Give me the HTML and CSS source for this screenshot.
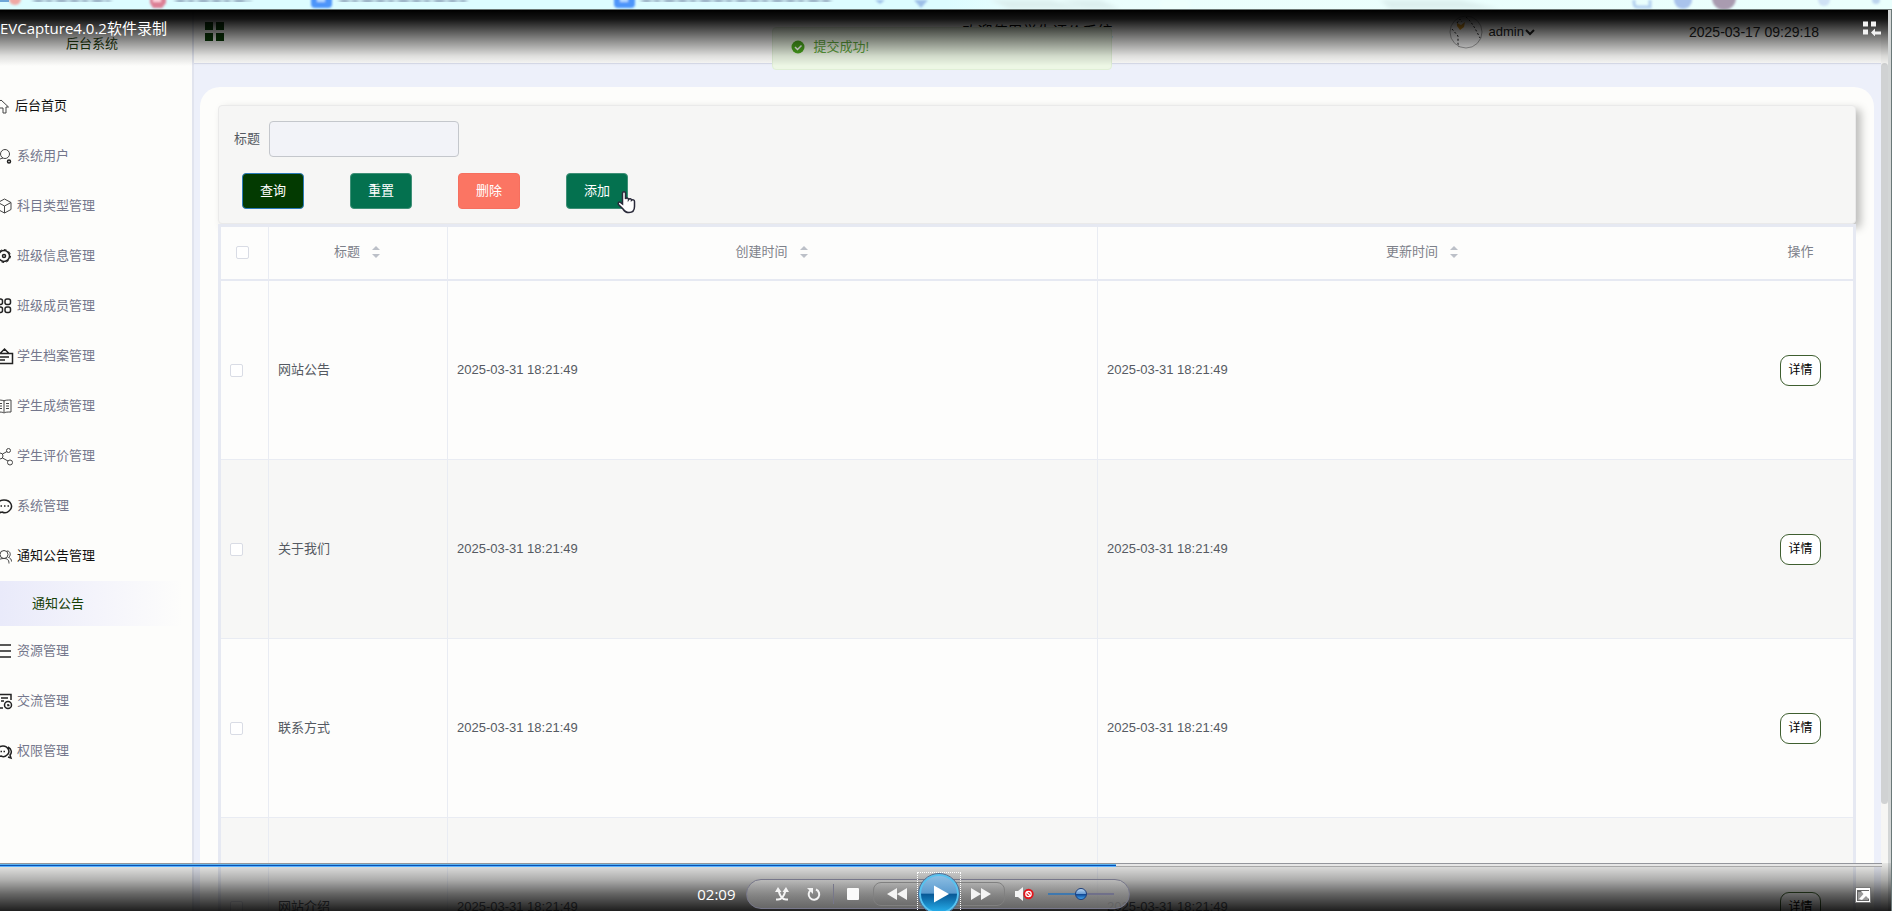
FILE: index.html
```html
<!DOCTYPE html>
<html lang="zh-CN">
<head>
<meta charset="utf-8">
<title>EVCapture4.0.2软件录制</title>
<link rel="stylesheet" href="styles.css">
</head>
<body>
<div class="desktop-strip" aria-hidden="true">
  <svg class="strip-art" width="1892" height="9" viewBox="0 0 1892 9">
    <defs>
      <filter id="soft" x="-20%" y="-100%" width="140%" height="300%"><feGaussianBlur stdDeviation="2"/></filter>
      <filter id="faint" x="-20%" y="-100%" width="140%" height="300%"><feGaussianBlur stdDeviation="1"/></filter>
    </defs>
    <path d="M1010 9l-20-9h60l40 9zM1090 9l-30-9h40l20 9zM1390 9l-10-9h80l40 9z" fill="#dcefee" filter="url(#soft)"/>
    <path d="M1160 0h30v9h-30z" fill="#eefffc" filter="url(#soft)"/>
    <g fill="none" stroke="#9cb4c6" stroke-width="9" stroke-dasharray="9 3 6 4 11 3" filter="url(#soft)">
      <path d="M34 0h76M176 1h74M340 1h128M642 0h188"/>
    </g>
    <g filter="url(#faint)">
      <circle cx="15" cy="-1" r="6" fill="#f0a8a4"/>
      <path d="M150 -4h16v7l-4 5h-9l-3-5z" fill="#dd7f95"/>
      <path d="M153 -2h8v4h-8z" fill="#ffd4de"/>
      <path d="M311 -4h21v8q0 4-4 4h-13q-4 0-4-4zM614 -4h21v8q0 4-4 4h-13q-4 0-4-4z" fill="#4d95fa"/>
      <path d="M317 -4h8v6h-8zM620 -4h8v6h-8z" fill="#b9dcff"/>
      <path d="M1634 0v3q0 4 4 4h12V0" fill="none" stroke="#b3d0ef" stroke-width="3"/>
      <circle cx="1683" cy="0" r="9" fill="#a9c3ec"/>
      <circle cx="1724" cy="-2" r="12" fill="#a99bb0"/>
      <circle cx="1824" cy="0" r="6" fill="#cfe2f5"/>
      <circle cx="1876" cy="0" r="4" fill="#bcd5ee"/>
      <path d="M914 0h14l-7 8zM875 0h10l-5 4z" fill="#9dc0e8"/>
    </g>
    <path d="M0 0h9v2H0z" fill="#6fa7d8"/>
  </svg>
</div>

<div class="player">
  <div class="app">
    <aside class="sidebar">
      <div class="brand">后台系统</div>
      <nav>
        <ul class="menu">
          <li><a class="menu-link menu-home" href="#"><svg viewBox="0 0 16 16"><path d="M0 8.5L7 2l7.500 7H12v6H9v-5H5.500v5H2V8"/></svg>后台首页</a></li>
          <li><a class="menu-link" href="#"><svg viewBox="0 0 16 16"><circle cx="9" cy="6" r="4.5"/><path d="M2 15c0-3 2-4.500 5-5"/><circle class="bold" cx="13" cy="13.5" r="1.5"/></svg>系统用户</a></li>
          <li><a class="menu-link" href="#"><svg viewBox="0 0 16 16"><path d="M8.500 1L15 4.500v7L8.500 15 2 11.500v-7zM2 4.500L8.500 8 15 4.500M8.500 8v7"/></svg>科目类型管理</a></li>
          <li><a class="menu-link" href="#"><svg class="bold" viewBox="0 0 16 16"><circle cx="8" cy="8" r="5.5"/><circle cx="8" cy="8" r="1.5"/><circle cx="8" cy="8" r="6.5" stroke-width="1" stroke-dasharray="2.5 2.5"/></svg>班级信息管理</a></li>
          <li><a class="menu-link" href="#"><svg class="bold" viewBox="0 0 16 16"><rect x="1" y="1" width="5.5" height="5.5" rx="2"/><rect x="9" y="1" width="5.5" height="5.5" rx="2"/><rect x="1" y="9" width="5.5" height="5.5" rx="2"/><rect x="9" y="9" width="5.5" height="5.5" rx="2"/></svg>班级成员管理</a></li>
          <li><a class="menu-link" href="#"><svg class="bold" viewBox="0 0 16 16"><path d="M1 5.500h15.500v10H1zM4 5.500l4.500-4.500L13 5.500M4 9h9M4 12h5"/></svg>学生档案管理</a></li>
          <li><a class="menu-link" href="#"><svg viewBox="0 0 16 16"><path d="M8 2v12M8 3c-1-1-5-1-7-1v12c3 0 6 0 7 1 1-1 4-1 7-1V2c-3 0-6 0-7 1M10 5.500h3M10 8h3M10 10.500h3M3 5.500h3M3 8h3M3 10.500h3"/></svg>学生成绩管理</a></li>
          <li><a class="menu-link" href="#"><svg viewBox="0 0 16 16"><circle cx="4" cy="8" r="3"/><circle cx="12.5" cy="2.5" r="2"/><circle cx="14" cy="14.5" r="2.5"/><path d="M6.500 6l4.500-2.500M6.500 10l5.500 3"/></svg>学生评价管理</a></li>
          <li><a class="menu-link" href="#"><svg class="bold" viewBox="0 0 16 16"><path d="M4 14c-6-4-3-12 4-12s10 7 5 11c-2 2-5 2-7 1l-3 1z"/><path d="M4.500 8h1.500M8 8h1.500M11.500 8H13"/></svg>系统管理</a></li>
          <li><a class="menu-link menu-open" href="#"><svg viewBox="0 0 16 16"><circle cx="8" cy="6.5" r="4"/><path d="M2 14c1-3 3-3.500 6-3.500s5 1 5 5M11 3c4 0 4 5 1.500 6.500 2 .5 3 2 3 4"/></svg>通知公告管理</a>
            <ul class="submenu"><li><a class="submenu-link" href="#">通知公告</a></li></ul>
          </li>
          <li><a class="menu-link" href="#"><svg class="bold" viewBox="0 0 16 16"><path d="M0 2h15M0 8h15M0 14h15"/></svg>资源管理</a></li>
          <li><a class="menu-link" href="#"><svg class="bold" viewBox="0 0 16 16"><path d="M1 1.500h14V7M1 1.500V15h6M5 5h7M5 8h3"/><circle cx="12" cy="12" r="3.5"/><path d="M12 11v1.500h1.500"/></svg>交流管理</a></li>
          <li><a class="menu-link" href="#"><svg class="bold" viewBox="0 0 16 16"><path d="M3 13c-4-4-1-10 4-10s8 6 4 9c-2 2-4 2-6 1l-3 1zM12 4c4 2 4 6 2 8l1 3-3-1"/><path d="M4.500 8.500H6M7.500 8.500H9"/></svg>权限管理</a></li>
        </ul>
      </nav>
    </aside>

    <main class="main">
      <header class="topbar">
        <button class="collapse" type="button" aria-label="折叠菜单"><i></i><i></i><i></i><i></i></button>
        <h1 class="site-title">欢迎使用学生评价系统</h1>
        <div class="topbar-right">
          <button class="user" type="button">
            <svg class="avatar" viewBox="0 0 34 34"><circle cx="17" cy="17" r="16" fill="#fff" stroke="#aaa"/><path d="M3 14l6 7v8l1 3M17 2c6 5 10 13 14 21M8 8l3-4 2 3" fill="none" stroke="#222" stroke-dasharray="2 2"/><path d="M8 8l4 2 4-3-1 5-4 3-3-4z" fill="#e09a20"/></svg>
            <span>admin</span>
            <svg class="chevron" viewBox="0 0 10 8"><path d="M1 2l4 4 4-4"/></svg>
          </button>
          <time class="clock">2025-03-17 09:29:18</time>
        </div>
      </header>

      <section class="card">
        <form class="filter">
          <div class="field"><label for="title">标题</label><input id="title" type="text"></div>
          <div class="actions">
            <button class="btn btn-query" type="button">查询</button>
            <button class="btn" type="button">重置</button>
            <button class="btn btn-delete" type="button">删除</button>
            <button class="btn" type="button">添加</button>
          </div>
        </form>

        <table class="grid">
          <colgroup><col class="col-check"><col class="col-title"><col><col><col class="col-action"></colgroup>
          <thead>
            <tr>
              <th><input type="checkbox" aria-label="全选"></th>
              <th>标题<svg class="sort" viewBox="0 0 8 12"><path d="M4 0l4 4H0zM0 8h8l-4 4z"/></svg></th>
              <th>创建时间<svg class="sort" viewBox="0 0 8 12"><path d="M4 0l4 4H0zM0 8h8l-4 4z"/></svg></th>
              <th>更新时间<svg class="sort" viewBox="0 0 8 12"><path d="M4 0l4 4H0zM0 8h8l-4 4z"/></svg></th>
              <th>操作</th>
            </tr>
          </thead>
          <tbody>
            <tr><td><input type="checkbox" aria-label="选择网站公告"></td><td>网站公告</td><td>2025-03-31 18:21:49</td><td>2025-03-31 18:21:49</td><td><button class="detail" type="button">详情</button></td></tr>
            <tr><td><input type="checkbox" aria-label="选择关于我们"></td><td>关于我们</td><td>2025-03-31 18:21:49</td><td>2025-03-31 18:21:49</td><td><button class="detail" type="button">详情</button></td></tr>
            <tr><td><input type="checkbox" aria-label="选择联系方式"></td><td>联系方式</td><td>2025-03-31 18:21:49</td><td>2025-03-31 18:21:49</td><td><button class="detail" type="button">详情</button></td></tr>
            <tr><td><input type="checkbox" aria-label="选择网站介绍"></td><td>网站介绍</td><td>2025-03-31 18:21:49</td><td>2025-03-31 18:21:49</td><td><button class="detail" type="button">详情</button></td></tr>
          </tbody>
        </table>
      </section>
    </main>
    <div class="scroll-track"><div class="scroll-thumb"></div></div>
  </div>

  <div class="toast" role="status">
    <svg viewBox="0 0 14 14"><circle cx="7" cy="7" r="6.5"/><path d="M4 7l2.500 2.500L10.500 5.500"/></svg>
    <span>提交成功!</span>
  </div>

  <svg class="pointer" viewBox="0 0 20 24"><path d="M5.500 14V3.500c0-2.500 3-2.500 3 0V9c.5-1.500 3-1.200 3 .5 .8-1.300 3-1 3 .8 1-1 3-.5 3 1.200v5c0 3.500-2 6-5.500 6-3 0-4.500-1-6-3.500L1.500 14.500c-1-2 1-3 2-2z"/></svg>

  <div class="caption">
    <span>EVCapture4.0.2软件录制</span>
    <button class="library" type="button" aria-label="切换到媒体库"><svg viewBox="0 0 18 14"><path d="M0 0h5v5H0zM8 0h5v5H8zM0 8h5v5H0zM8 11l4-4v3h6v3h-6v2z"/></svg></button>
  </div>

  <div class="deck">
    <div class="seek" role="progressbar" aria-label="播放进度" aria-valuenow="59"><div class="seek-fill" style="width:59.3%"></div></div>
    <div class="controls">
      <time class="elapsed">02:09</time>
      <div class="pill">
        <button class="icon" type="button" aria-label="无序播放"><svg width="14" height="14" viewBox="0 0 14 14"><path d="M1 12.500h2c4 0 6-3 7.500-9M13 12.500h-2c-4 0-6-3-7.500-9" fill="none" stroke="#f4f4f4" stroke-width="2"/><path d="M0 5l3-5 3.500 5zM7.500 5L11 0l3 5z" fill="#f4f4f4"/></svg></button>
        <button class="icon icon-repeat" type="button" aria-label="重复"><svg width="14" height="14" viewBox="0 0 14 14"><path d="M9 2.500a5.300 5.300 0 1 1-5 .5" fill="none" stroke="#f4f4f4" stroke-width="2"/><path d="M0 1h6v6z" fill="#f4f4f4"/></svg></button>
        <i class="divider"></i>
        <button class="icon icon-stop" type="button" aria-label="停止"><svg width="12" height="12" viewBox="0 0 12 12"><rect width="12" height="12" rx="1" fill="#fafafa"/></svg></button>
        <div class="transport">
          <button class="icon" type="button" aria-label="快退"><svg width="20" height="12" viewBox="0 0 20 12"><path d="M10 0v12L0 6zM20 0v12L10 6z" fill="#f4f4f4"/></svg></button>
          <button class="play" type="button" aria-label="播放"><svg viewBox="0 0 42 42">
            <defs><linearGradient id="ball" x1="0" y1="0" x2="0" y2="1"><stop offset="0" stop-color="#8fc0e4"/><stop offset=".48" stop-color="#5b9bcf"/><stop offset=".5" stop-color="#075795"/><stop offset="1" stop-color="#28b4f0"/></linearGradient></defs>
            <circle cx="21" cy="21" r="19" fill="url(#ball)" stroke="#56c2f0" stroke-width="2"/><circle cx="21" cy="21" r="20.5" fill="none" stroke="#4a6f98"/><path d="M16 12.500l15 8.500-15 8.500z" fill="#fff"/></svg></button>
          <button class="icon" type="button" aria-label="快进"><svg width="20" height="12" viewBox="0 0 20 12"><path d="M0 0v12l10-6zM10 0v12l10-6z" fill="#f4f4f4"/></svg></button>
        </div>
        <button class="icon icon-mute" type="button" aria-label="静音"><svg width="19" height="14" viewBox="0 0 19 14"><path d="M0 4h3l5-4v14l-5-4H0z" fill="#f4f4f4"/><circle cx="13.5" cy="7" r="5.2" fill="#e3151b"/><circle cx="13.5" cy="7" r="2.7" fill="none" stroke="#fff" stroke-width="1.2"/><path d="M11.500 5l4 4" stroke="#fff" stroke-width="1.2"/></svg></button>
        <input class="volume" type="range" min="0" max="100" value="50" aria-label="音量">
      </div>
      <button class="fullscreen" type="button" aria-label="全屏"><svg viewBox="0 0 16 16"><path d="M0 0h16v16H0z" fill="#777"/><path d="M1 1h14v14H1z" fill="#fff"/><path d="M2 3h12v11H2z" fill="#666"/><path d="M3 5h10v8H3z" fill="#999"/><path d="M6 4h8v8l-3-3-4 4-3-1 4.500-5z" fill="#fff"/></svg></button>
    </div>
  </div>
</div>
</body>
</html>
```
FILE: styles.css
```css
* { box-sizing: border-box; }

body {
  margin: 0;
  height: 100vh;
  display: flex;
  flex-direction: column;
  overflow: hidden;
  font-family: "Liberation Sans", "Noto Sans CJK SC", sans-serif;
  font-size: 13px;
  line-height: 20px;
  color: #555a62;
}

button { font: inherit; color: inherit; background: none; border: 0; padding: 0; }
ul { list-style: none; margin: 0; padding: 0; }
a { color: inherit; text-decoration: none; }
svg { display: block; }

.desktop-strip {
  height: 10px;
  flex: none;
  overflow: hidden;
  background: linear-gradient(90deg, #dcfcff 0, #dcfcff 50%, #ebfefd 55%, #eafffd 100%);
  border-bottom: 1px solid #6c7775;
}

.player {
  position: relative;
  flex: 1;
  min-height: 0;
  overflow: hidden;
  border-right: 1px solid #6a7878;
  background: #d3d6d6;
  padding-right: 3px;
}

.app { display: flex; height: 100%; background: #edf0fa; }

/* sidebar */
.sidebar {
  flex: none;
  width: 194px;
  background: #fdfdfb;
  border-right: 2px solid #e1e4ee;
}
.brand {
  height: 71px;
  padding: 24px 0 0 66px;
  color: #1d3c0c;
}
.menu-link {
  display: flex;
  align-items: center;
  gap: 5px;
  height: 50px;
  color: #74778c;
}
.menu-link svg {
  flex: none;
  width: 16px;
  height: 16px;
  margin-left: -4px;
  fill: none;
  stroke: #444;
  stroke-width: 1;
  overflow: visible;
}
.menu-link svg.bold, .menu-link .bold { stroke: #222; stroke-width: 1.5; }
.menu-home { color: #111; }
.menu-home svg { margin-left: -6px; }
.menu-open { color: #111; }
.submenu-link {
  display: block;
  height: 45px;
  padding: 13px 0 0 32px;
  color: #163f06;
  background: linear-gradient(90deg, #e9eafa 0, #f4f4fb 50%, #fdfdfb 95%);
}

/* top bar */
.main { flex: 1; min-width: 0; }
.topbar {
  display: grid;
  grid-template-columns: 1fr auto 1fr;
  align-items: center;
  height: 54px;
  padding: 0 62px 10px 11px;
  background: #fdfdfb;
  border-bottom: 1px solid #dadeec;
}
.collapse {
  display: grid;
  grid-template-columns: 8px 8px;
  gap: 3px;
  width: 19px;
}
.collapse i { height: 8px; background: #0a3f08; }
.site-title { margin: 0 0 0 51px; font-size: 15px; font-weight: 400; color: #000; }
.topbar-right { display: flex; align-items: center; justify-content: flex-end; gap: 154px; color: #222; }
.user { display: flex; align-items: center; font-size: 13px; }
.avatar { width: 34px; height: 34px; margin-right: 6px; }
.chevron { width: 10px; height: 8px; margin-left: 1px; fill: none; stroke: #222; stroke-width: 2; }
.clock { font-size: 14px; }

/* content card */
.card {
  margin: 23px 7px 0 6px;
  padding: 18px 18px 40px;
  background: #fdfdfb;
  border-radius: 20px 20px 0 0;
}
.filter {
  padding: 15px 15px 14px;
  background: #f6f6f5;
  border: 1px solid #eaeaea;
  border-radius: 4px;
  box-shadow: 5px 4px 8px rgba(0, 0, 0, .25);
}
.field { display: flex; align-items: center; gap: 9px; }
.field input {
  width: 190px;
  height: 36px;
  padding: 0 12px;
  font: inherit;
  background: #f2f3f8;
  border: 1px solid #c4c7cc;
  border-radius: 4px;
}
.actions { display: flex; gap: 46px; padding: 16px 0 0 8px; }
.btn {
  width: 62px;
  height: 36px;
  color: #fff;
  background: #04714f;
  border: 1px solid #3f9077;
  border-radius: 4px;
}
.btn-query { background: #033a01; border-color: #2b7bb9; }
.btn-delete { background: #fb7563; border-color: #f66f5f; }

/* table */
.grid {
  width: 100%;
  table-layout: fixed;
  border-collapse: separate;
  border-spacing: 0;
  background: #fdfdfc;
  border: 3px solid #e6e9f2;
}
.col-check { width: 48px; }
.col-title { width: 179px; }
.col-action { width: 105px; }
.grid th {
  height: 54px;
  padding: 0 2px 2px 0;
  font-weight: 400;
  color: #7d818a;
  border-bottom: 2px solid #e6e9f2;
  border-right: 1px solid #e9ecf3;
}
.grid td {
  height: 179px;
  padding: 0 9px;
  border-bottom: 1px solid #e9ecf3;
  border-right: 1px solid #e9ecf3;
}
.grid th:nth-child(n+4), .grid td:nth-child(n+4) { border-right: 0; }
.grid th:last-child { padding-right: 0; }
.grid td:last-child { text-align: center; }
.grid tbody tr:nth-child(even) { background: #f7f7f6; }
.grid input {
  appearance: none;
  display: block;
  width: 13px;
  height: 13px;
  margin: 0;
  background: #fff;
  border: 1px solid #d9dce5;
  border-radius: 2px;
}
.grid th input { margin: 0 auto 0 15px; }
.sort { display: inline-block; width: 8px; height: 12px; margin-left: 12px; vertical-align: -2px; fill: #bcc0c8; }
.detail {
  width: 41px;
  height: 31px;
  font-size: 12px;
  color: #000;
  background: #fff;
  border: 1px solid #3f5f30;
  border-radius: 9px;
}

.scroll-track { flex: none; width: 7px; padding-top: 53px; background: #f6f6f4; }
.scroll-thumb { height: 741px; background: #d0d2d3; border-radius: 4px; }

/* layers above the recorded page */
.toast {
  position: absolute;
  left: calc(50% - 174px);
  top: 17px;
  display: flex;
  align-items: center;
  gap: 9px;
  width: 340px;
  height: 43px;
  padding: 0 0 3px 18px;
  color: #5fa63c;
  background: #edf7e5;
  border: 1px solid #e0efd6;
  border-radius: 4px;
}
.toast svg { width: 14px; height: 14px; fill: #4ba81e; }
.toast path { fill: none; stroke: #fff; stroke-width: 1.5; }

.pointer {
  position: absolute;
  left: 617px;
  top: 180px;
  width: 20px;
  height: 24px;
  fill: #fff;
  stroke: #2a2a3a;
  stroke-width: 1.5;
}

.caption {
  position: absolute;
  inset: 0 3px auto 0;
  display: flex;
  justify-content: space-between;
  align-items: flex-start;
  height: 56px;
  padding: 8px 7px 0 0;
  font-family: "Open Sans", "Noto Sans CJK SC", sans-serif;
  font-size: 15px;
  color: #fff;
  background: linear-gradient(180deg, #000 0, rgba(0, 0, 0, .92) 16%, rgba(0, 0, 0, .5) 50%, rgba(0, 0, 0, .12) 82%, transparent 100%);
}
.library svg { width: 18px; height: 15px; margin-top: 3px; fill: #f2f2f2; }

.deck {
  position: absolute;
  inset: auto 0 0 0;
  background: linear-gradient(180deg, rgba(0, 0, 0, .06) 0, rgba(0, 0, 0, .3) 35%, rgba(0, 0, 0, .6) 65%, rgba(0, 0, 0, .88) 100%);
}
.seek {
  height: 4px;
  margin-right: 9px;
  background: #e6e6e6;
  border-top: 1px solid #94969c;
  border-bottom: 1px solid #a8a8a8;
}
.seek-fill {
  height: 3px;
  background: linear-gradient(180deg, #5db4ee 0, #5db4ee 1px, #0a50b4 1px, #0a50b4 2px, #58b4ff 2px);
}
.controls {
  display: grid;
  grid-template-columns: 1fr auto 1fr;
  align-items: start;
  height: 44px;
  padding: 12px 16px 0 0;
}
.elapsed {
  justify-self: end;
  padding: 5px 10px 0 0;
  font-family: "Open Sans", sans-serif;
  font-size: 15px;
  color: #fff;
}
.pill {
  display: flex;
  align-items: center;
  width: 384px;
  height: 30px;
  padding-left: 28px;
  background: linear-gradient(180deg, rgba(200, 200, 200, .5), rgba(130, 130, 130, .7));
  border: 1px solid #77778a;
  border-radius: 15px;
}
.icon-repeat { margin-left: 18px; }
.divider { width: 1px; height: 20px; margin-left: 12px; background: #77778a; }
.icon-stop { margin-left: 13px; }
.transport {
  display: flex;
  align-items: center;
  justify-content: space-between;
  width: 132px;
  height: 24px;
  margin-left: 14px;
  padding: 0 13px;
  border: 1px solid #808080;
  border-radius: 8px;
}
.play { flex: none; width: 42px; height: 42px; outline: 1px dotted #fff; }
.play svg { width: 42px; height: 42px; }
.icon-mute { margin-left: 10px; }
.volume {
  appearance: none;
  width: 66px;
  height: 14px;
  margin: 0 0 0 14px;
  background: linear-gradient(90deg, #3f78ae 50%, #70708a 50%) center / 100% 2px no-repeat;
}
.volume::-webkit-slider-thumb {
  appearance: none;
  width: 12px;
  height: 12px;
  border: 1px solid #1d3f7c;
  border-radius: 50%;
  background: linear-gradient(180deg, #b8d4f0 0, #6d9ed4 45%, #0c3f8c 50%, #3fa4f0 100%);
}
.fullscreen { justify-self: end; margin: 8px 4px 0 0; }
.fullscreen svg { width: 16px; height: 16px; }
```
